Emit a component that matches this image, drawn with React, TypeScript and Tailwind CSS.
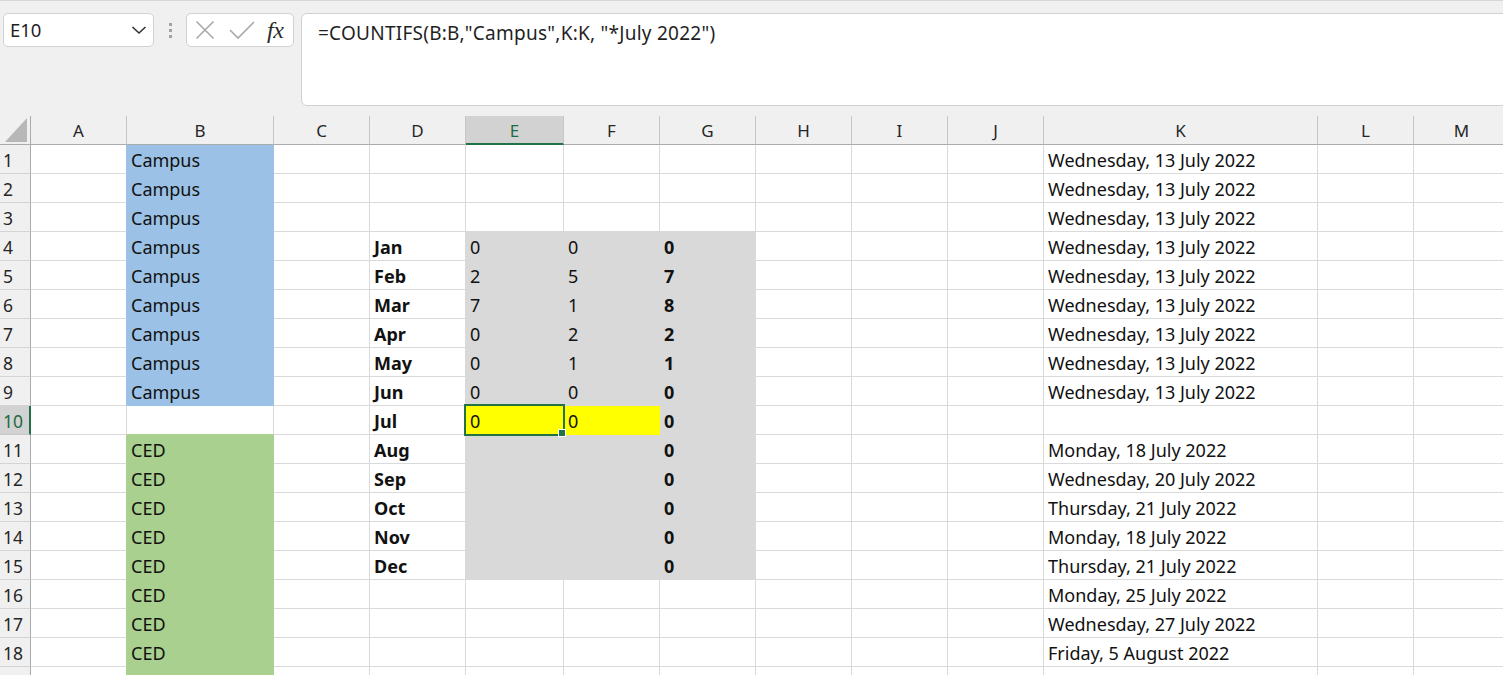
import React from "react";

type Fill = "blue" | "green" | "gray" | "yellow" | null;

const COLS = [
    { key: "A", w: "w-[96px]" },
    { key: "B", w: "w-[147px]" },
    { key: "C", w: "w-[96px]" },
    { key: "D", w: "w-[96px]" },
    { key: "E", w: "w-[98px]" },
    { key: "F", w: "w-[96px]" },
    { key: "G", w: "w-[96px]" },
    { key: "H", w: "w-[96px]" },
    { key: "I", w: "w-[96px]" },
    { key: "J", w: "w-[96px]" },
    { key: "K", w: "w-[274px]" },
    { key: "L", w: "w-[96px]" },
    { key: "M", w: "w-[96px]" },
];

const FILL_BG: Record<string, string> = {
    blue: "bg-[#9bc2e6]",
    green: "bg-[#a9d08e]",
    gray: "bg-[#d9d9d9]",
    yellow: "bg-[#ffff00]",
};
const FILL_BR: Record<string, string> = {
    blue: "border-r-[#9bc2e6]",
    green: "border-r-[#a9d08e]",
    gray: "border-r-[#d9d9d9]",
    yellow: "border-r-[#ffff00]",
};
const FILL_BB: Record<string, string> = {
    blue: "border-b-[#9bc2e6]",
    green: "border-b-[#a9d08e]",
    gray: "border-b-[#d9d9d9]",
    yellow: "border-b-[#ffff00]",
};

const MONTHS = ["Jan", "Feb", "Mar", "Apr", "May", "Jun", "Jul", "Aug", "Sep", "Oct", "Nov", "Dec"];
const E_VALS = ["0", "2", "7", "0", "0", "0", "0"];
const F_VALS = ["0", "5", "1", "2", "1", "0", "0"];
const G_VALS = ["0", "7", "8", "2", "1", "0", "0", "0", "0", "0", "0", "0"];

const K_VALS: Record<number, string> = {
    11: "Monday, 18 July 2022",
    12: "Wednesday, 20 July 2022",
    13: "Thursday, 21 July 2022",
    14: "Monday, 18 July 2022",
    15: "Thursday, 21 July 2022",
    16: "Monday, 25 July 2022",
    17: "Wednesday, 27 July 2022",
    18: "Friday, 5 August 2022",
};

function fillOf(row: number, col: number): Fill {
    // col: 0 = A ... 12 = M
    if (col === 1) {
        if (row >= 1 && row <= 9) return "blue";
        if (row >= 11) return "green";
        return null;
    }
    if (col >= 4 && col <= 6 && row >= 4 && row <= 15) {
        if (row === 10 && col !== 6) return "yellow";
        return "gray";
    }
    return null;
}

function cellText(row: number, col: number): { text: string; bold?: boolean } | null {
    if (row > 18) return null;
    if (col === 1) {
        if (row >= 1 && row <= 9) return { text: "Campus" };
        if (row >= 11) return { text: "CED" };
    }
    if (col === 3 && row >= 4 && row <= 15) return { text: MONTHS[row - 4], bold: true };
    if (col === 4 && row >= 4 && row <= 10) return { text: E_VALS[row - 4] };
    if (col === 5 && row >= 4 && row <= 10) return { text: F_VALS[row - 4] };
    if (col === 6 && row >= 4 && row <= 15) return { text: G_VALS[row - 4], bold: true };
    if (col === 10) {
        if (row >= 1 && row <= 9) return { text: "Wednesday, 13 July 2022" };
        if (K_VALS[row]) return { text: K_VALS[row] };
    }
    return null;
}

function Cell({ row, col }: { row: number; col: number }) {
    const own = fillOf(row, col);
    const rightFill = own ?? fillOf(row, col + 1);
    const bottomFill = own ?? fillOf(row + 1, col);
    const content = cellText(row, col);
    return (
        <div
            className={`${COLS[col].w} h-[29px] shrink-0 border-r border-b pl-[4px] leading-[31px] whitespace-nowrap overflow-hidden ${
                own ? FILL_BG[own] : "bg-white"
            } ${rightFill ? FILL_BR[rightFill] : "border-r-[#dadada]"} ${
                bottomFill ? FILL_BB[bottomFill] : "border-b-[#dadada]"
            } ${content?.bold ? "font-bold" : ""}`}
        >
            {content?.text}
        </div>
    );
}

function FormulaBar() {
    return (
        <div className="h-[116px] border-t border-[#d6d6d6] flex items-start pt-[12px] pl-[3px] overflow-hidden">
            <div className="w-[151px] h-[34px] shrink-0 rounded-[5px] border border-[#d1d1d1] bg-white flex items-center justify-between pl-[6px] pr-[6px]">
                <span className="text-[18.5px] text-[#1f1f1f]">E10</span>
                <svg width="16" height="10" viewBox="0 0 16 10" fill="none">
                    <path d="M1.5 2 L8 8 L14.5 2" stroke="#333" strokeWidth="1.6" />
                </svg>
            </div>
            <div className="w-[32px] h-[34px] shrink-0 flex flex-col items-center justify-center gap-[3px]">
                <div className="w-[3px] h-[3px] bg-[#a3a3a3]" />
                <div className="w-[3px] h-[3px] bg-[#a3a3a3]" />
                <div className="w-[3px] h-[3px] bg-[#a3a3a3]" />
            </div>
            <div className="w-[108px] h-[34px] shrink-0 rounded-[5px] border border-[#d1d1d1] bg-white flex items-center pl-[8px]">
                <svg width="20" height="20" viewBox="0 0 20 20" fill="none">
                    <path d="M1.5 1.5 L18.5 18.5 M18.5 1.5 L1.5 18.5" stroke="#a8a8a8" strokeWidth="1.6" />
                </svg>
                <svg width="26" height="20" viewBox="0 0 26 20" fill="none" className="ml-[14px]">
                    <path d="M1 10 L9 18 L25 2" stroke="#a8a8a8" strokeWidth="1.6" />
                </svg>
                <span className="ml-[12px] text-[24px] italic leading-none text-[#2b2b2b] font-['Liberation_Serif',serif] tracking-[-0.5px]">
                    fx
                </span>
            </div>
            <div className="w-[1230px] h-[93px] shrink-0 ml-[7px] rounded-[6px] border border-[#d1d1d1] bg-white pl-[16px] pt-[6px]">
                <span className="text-[19px] tracking-[0.25px] leading-[24px] text-[#1f1f1f] whitespace-nowrap">
                    =COUNTIFS(B:B,"Campus",K:K, "*July 2022")
                </span>
            </div>
        </div>
    );
}

function HeaderRow() {
    return (
        <div className="flex h-[29px] text-[17px]">
            <div className="w-[31px] h-[29px] shrink-0 border-r border-b border-r-[#ababab] border-b-[#ababab] flex items-end justify-end pr-[3px] pb-[2px]">
                <svg width="22" height="24" viewBox="0 0 22 24">
                    <polygon points="22,0 22,24 0,24" fill="#b7b7b7" />
                </svg>
            </div>
            {COLS.map((c) =>
                c.key === "E" ? (
                    <div
                        key={c.key}
                        className={`${c.w} h-[29px] shrink-0 bg-[#d2d2d2] border-r border-r-[#c6c6c6] border-b-2 border-b-[#217346] text-center leading-[30px] text-[#1e6b41]`}
                    >
                        {c.key}
                    </div>
                ) : (
                    <div
                        key={c.key}
                        className={`${c.w} h-[29px] shrink-0 border-r border-r-[#c6c6c6] border-b border-b-[#ababab] text-center leading-[30px] text-[#262626]`}
                    >
                        {c.key}
                    </div>
                )
            )}
        </div>
    );
}

export default function App() {
    const rows = Array.from({ length: 19 }, (_, i) => i + 1);
    return (
        <div className="w-[1503px] h-[675px] overflow-hidden bg-[#f0f0f0] text-[18px] text-[#111] font-['Noto_Sans',sans-serif]">
            <FormulaBar />
            <div className="relative">
                <HeaderRow />
                {rows.map((r) => (
                    <div key={r} className="flex h-[29px]">
                        {r === 10 ? (
                            <div className="w-[31px] h-[29px] shrink-0 bg-[#d2d2d2] border-r-2 border-r-[#217346] border-b border-b-[#c6c6c6] pl-[3px] text-[17.5px] leading-[31px] text-[#1e6b41]">
                                {r}
                            </div>
                        ) : (
                            <div className="w-[31px] h-[29px] shrink-0 border-r border-r-[#ababab] border-b border-b-[#d4d4d4] pl-[3px] text-[17.5px] leading-[31px] text-[#262626]">
                                {r <= 18 ? r : ""}
                            </div>
                        )}
                        {COLS.map((c, ci) => (
                            <Cell key={c.key} row={r} col={ci} />
                        ))}
                    </div>
                ))}
                {/* active cell E10 */}
                <div className="absolute left-[464px] top-[288px] w-[101px] h-[32px] border-2 border-[#217346] pointer-events-none" />
                <div className="absolute left-[558px] top-[313px] w-[8px] h-[8px] bg-[#217346] border border-white" />
            </div>
        </div>
    );
}
